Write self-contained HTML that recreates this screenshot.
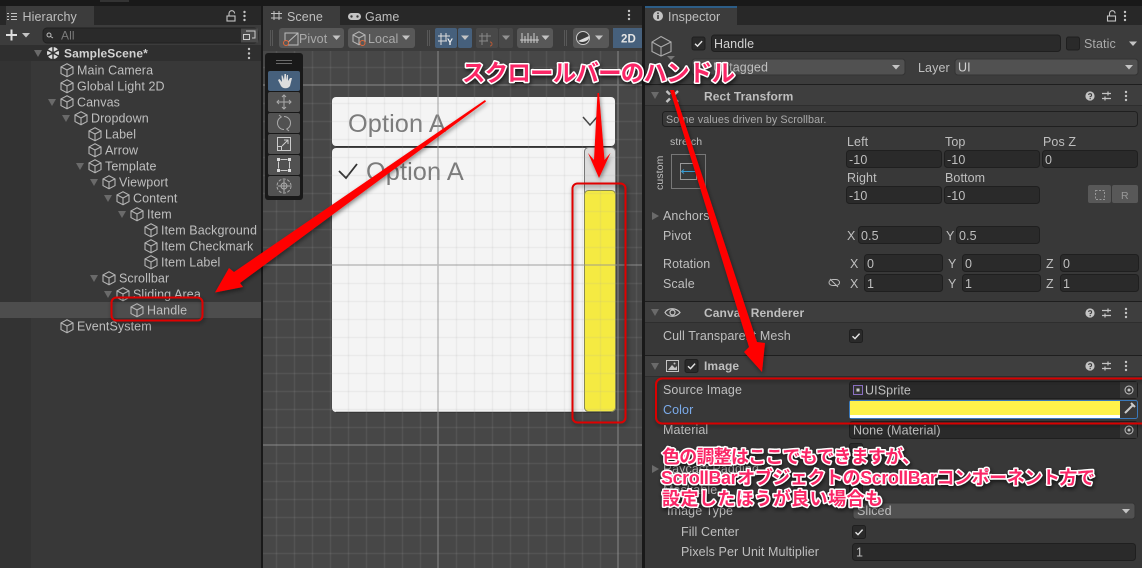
<!DOCTYPE html>
<html lang="ja"><head><meta charset="utf-8"><title>Unity</title>
<style>
html,body{margin:0;padding:0;background:#191919;width:1142px;height:568px;overflow:hidden}
svg{display:block;position:absolute;left:0;top:0}
text{font-family:"Liberation Sans","Noto Sans CJK JP",sans-serif;font-size:12.5px;fill:#bfbfbf;letter-spacing:.1px}
.b{font-weight:bold}
.d{fill:#2a2a2a;stroke:#1f1f1f}
.s{fill:#515151;stroke:#333}
.btn{fill:#585858}
.ic{fill:none;stroke:#b4b4b4;stroke-width:1.1}
.ann{font-family:"Liberation Sans","Noto Sans CJK JP",sans-serif;font-weight:bold;fill:#fb2566;stroke:#fff;stroke-width:3px;paint-order:stroke;stroke-linejoin:round;letter-spacing:0;filter:url(#sh)}
</style></head><body>
<svg width="1142" height="568" viewBox="0 0 1142 568" xmlns="http://www.w3.org/2000/svg">
<defs>
<filter id="sh" x="-5%" y="-20%" width="110%" height="140%"><feDropShadow dx="1" dy="2" stdDeviation="2" flood-color="#000" flood-opacity=".65"/></filter>
<filter id="sh2" x="-10%" y="-10%" width="120%" height="120%"><feDropShadow dx="1" dy="2" stdDeviation="2" flood-color="#000" flood-opacity=".45"/></filter>
<g id="cube"><path class="ic" d="M7 .8 13 3.9V10.6L7 13.7 1 10.6V3.9ZM1 3.9 7 7 13 3.9M7 7V13.7"/></g>
<path id="tri" d="M0 0H8L4 7Z" fill="#6a6a6a"/>
<path id="dd" d="M0 0H8L4 4.5Z" fill="#c4c4c4"/>
<g id="cb"><rect x=".5" y=".5" width="13" height="13" rx="2" fill="#2a2a2a" stroke="#1f1f1f"/><path d="M3.5 7.2 6 9.6 10.6 4.6" fill="none" stroke="#e4e4e4" stroke-width="1.4"/></g>
<g id="hp"><circle cx="4" cy="5" r="4.6" fill="#c4c4c4"/><path d="M2.6 3.9a1.5 1.4 0 1 1 1.6 1.6V6.3" fill="none" stroke="#3e3e3e" stroke-width="1.1"/><rect x="3.6" y="7" width="1.2" height="1.2" fill="#3e3e3e"/><path d="M16 2.5H25M16 7.5H25M22 .5V4.5M19 5.5V9.5" stroke="#c4c4c4" stroke-width="1.2" fill="none"/><circle cx="40" cy="1" r="1.2" fill="#c4c4c4"/><circle cx="40" cy="5" r="1.2" fill="#c4c4c4"/><circle cx="40" cy="9" r="1.2" fill="#c4c4c4"/></g>
<g id="lk"><path d="M2.5 5V2.5a2.8 2.8 0 0 1 5.6 0" fill="none" stroke="#c4c4c4" stroke-width="1.1"/><rect x=".5" y="5" width="8" height="5" fill="none" stroke="#c4c4c4" stroke-width="1.1"/><circle cx="18" cy="1" r="1.2" fill="#c4c4c4"/><circle cx="18" cy="5" r="1.2" fill="#c4c4c4"/><circle cx="18" cy="9" r="1.2" fill="#c4c4c4"/></g>
</defs>

<rect width="1142" height="568" fill="#191919"/>
<rect x="100" y="0" width="29" height="2" fill="#333"/>

<!-- HIERARCHY -->
<rect x="0" y="6" width="261" height="19" fill="#282828"/>
<rect x="6" y="6" width="88" height="19" fill="#3c3c3c"/>
<rect x="0" y="25" width="261" height="543" fill="#383838"/>
<rect x="0" y="25" width="261" height="20" fill="#3c3c3c"/>
<rect x="0" y="61" width="31" height="507" fill="#333"/>
<path d="M7 13.5H9M7 16.5H9M7 19.5H9" stroke="#c4c4c4"/><path d="M11 13.5H17M11 16.5H17M11 19.5H17" stroke="#c4c4c4"/>
<text x="22.5" y="21" style="font-size:12.5px">Hierarchy</text>
<use href="#lk" x="226.500" y="11"/>
<path d="M6 35H17M11.500 29.500V40.500" stroke="#ddd" stroke-width="2"/>
<use href="#dd" x="22" y="33"/>
<rect x="43" y="28" width="215" height="15" rx="4" fill="#2a2a2a" stroke="#202020"/>
<rect x="241" y="28.500" width="17" height="14" fill="#4a4a4a"/>
<circle cx="49" cy="35" r="2" fill="none" stroke="#bbb"/><path d="M50.500 36.500 53 38" stroke="#bbb"/>
<text x="61" y="39.500" style="fill:#7b7b7b;font-size:12px">All</text>
<path d="M246 31h9v7h-3M243.500 34.500h6v5h-6z" fill="none" stroke="#ccc"/>
<rect x="0" y="45" width="261" height="16" fill="#2f2f2f"/>
<use href="#tri" x="34" y="50"/>
<circle cx="53" cy="53" r="6" fill="#ddd"/><path d="M53 47V59M47.500 50 58.500 56M47.500 56 58.500 50" stroke="#2f2f2f" stroke-width="1.4"/>
<text x="64" y="57.500" class="b" style="font-size:12px;fill:#d2d2d2">SampleScene*</text>
<circle cx="249" cy="49" r="1.200" fill="#c4c4c4"/><circle cx="249" cy="53.500" r="1.200" fill="#c4c4c4"/><circle cx="249" cy="58" r="1.200" fill="#c4c4c4"/>
<rect x="0" y="302" width="261" height="16" fill="#4d4d4d"/>

<use href="#cube" x="60" y="63"/><text x="77" y="74.500">Main Camera</text>
<use href="#cube" x="60" y="79"/><text x="77" y="90.500">Global Light 2D</text>
<use href="#tri" x="48" y="99"/><use href="#cube" x="60" y="95"/><text x="77" y="106.500">Canvas</text>
<use href="#tri" x="62" y="115"/><use href="#cube" x="74" y="111"/><text x="91" y="122.500">Dropdown</text>
<use href="#cube" x="88" y="127"/><text x="105" y="138.500">Label</text>
<use href="#cube" x="88" y="143"/><text x="105" y="154.500">Arrow</text>
<use href="#tri" x="76" y="163"/><use href="#cube" x="88" y="159"/><text x="105" y="170.500">Template</text>
<use href="#tri" x="90" y="179"/><use href="#cube" x="102" y="175"/><text x="119" y="186.500">Viewport</text>
<use href="#tri" x="104" y="195"/><use href="#cube" x="116" y="191"/><text x="133" y="202.500">Content</text>
<use href="#tri" x="118" y="211"/><use href="#cube" x="130" y="207"/><text x="147" y="218.500">Item</text>
<use href="#cube" x="144" y="223"/><text x="161" y="234.500">Item Background</text>
<use href="#cube" x="144" y="239"/><text x="161" y="250.500">Item Checkmark</text>
<use href="#cube" x="144" y="255"/><text x="161" y="266.500">Item Label</text>
<use href="#tri" x="90" y="275"/><use href="#cube" x="102" y="271"/><text x="119" y="282.500">Scrollbar</text>
<use href="#tri" x="104" y="291"/><use href="#cube" x="116" y="287"/><text x="133" y="298.500">Sliding Area</text>
<use href="#cube" x="130" y="303"/><text x="147" y="314.500">Handle</text>
<use href="#cube" x="60" y="319"/><text x="77" y="330.500">EventSystem</text>

<!-- SCENE -->
<rect x="263" y="6" width="379" height="19" fill="#282828"/>
<rect x="263" y="6" width="77" height="19" fill="#3c3c3c"/>
<path d="M274 11V20M279 11V20M271 13.500H282M271 18H282" stroke="#c4c4c4"/>
<text x="287" y="21">Scene</text>
<rect x="348" y="13" width="13" height="7" rx="3.500" fill="#c4c4c4"/>
<circle cx="351.500" cy="16.500" r="1.200" fill="#3a3a3a"/><circle cx="357.500" cy="16.500" r="1.200" fill="#3a3a3a"/>
<text x="365" y="21">Game</text>
<circle cx="629" cy="11" r="1.200" fill="#c4c4c4"/><circle cx="629" cy="15" r="1.200" fill="#c4c4c4"/><circle cx="629" cy="19" r="1.200" fill="#c4c4c4"/>
<rect x="263" y="25" width="379" height="26" fill="#3c3c3c"/>
<rect x="263" y="51" width="379" height="517" fill="#474747"/>

<!-- UI panels in scene -->
<rect x="332" y="97" width="283" height="49" rx="4" fill="#f4f4f4"/>
<path d="M336 146.500H611" stroke="#333"/>
<rect x="332" y="148" width="283" height="264" rx="4" fill="#f4f4f4"/>
<path d="M336 412.200H611" stroke="#333"/>
<rect x="584.500" y="147.500" width="31" height="264" rx="4" fill="#dcdcdc" stroke="#777"/>
<rect x="584.500" y="190.500" width="31" height="221" rx="4" fill="#f5ea42" stroke="#8a8a50"/>
<text x="348" y="132" style="font-size:25.300px;fill:#7b7b7b;letter-spacing:.1px">Option A</text>
<text x="366" y="180" style="font-size:25.300px;fill:#7b7b7b;letter-spacing:.1px">Option A</text>
<path d="M583 117 590 125 597 117" fill="none" stroke="#444" stroke-width="1.500"/>
<path d="M339 171 346 178 357 164" fill="none" stroke="#333" stroke-width="1.800"/>

<!-- grid -->
<g stroke="#adadad" stroke-opacity=".13" stroke-width="1.500" fill="none">
<path d="M276.500 51V568M294.500 51V568M312.500 51V568M330.500 51V568M348.500 51V568M366.500 51V568M384.500 51V568M402.500 51V568M420.500 51V568M456.500 51V568M474.500 51V568M492.500 51V568M510.500 51V568M528.500 51V568M546.500 51V568M564.500 51V568M582.500 51V568M600.500 51V568M636.500 51V568"/>
<path d="M263 67.500H642M263 103.500H642M263 121.500H642M263 139.500H642M263 157.500H642M263 175.500H642M263 193.500H642M263 211.500H642M263 229.500H642M263 247.500H642M263 283.500H642M263 301.500H642M263 319.500H642M263 337.500H642M263 355.500H642M263 373.500H642M263 391.500H642M263 409.500H642M263 427.500H642M263 463.500H642M263 481.500H642M263 499.500H642M263 517.500H642M263 535.500H642M263 553.500H642"/>
</g>
<g stroke="#949494" stroke-opacity=".58" stroke-width="1.500" fill="none">
<path d="M438 51V568M618 51V568M263 85H642M263 265H642M263 445H642"/>
</g>

<!-- toolbar -->
<g>
<path d="M270.500 30V46M272.500 30V46M427.500 30V46M429.500 30V46M564.500 30V46M566.500 30V46" stroke="#585858"/>
<rect x="279" y="28" width="65" height="20" rx="3" class="btn"/>
<path d="M285 33H298V45H285Z" fill="none" stroke="#bbb"/><path d="M286 44 298 33" stroke="#bbb"/><circle cx="286" cy="43" r="2.500" fill="#585858" stroke="#e0683a"/>
<text x="299" y="43" style="fill:#aaa">Pivot</text><use href="#dd" x="332.500" y="35.500"/>
<rect x="348" y="28" width="67" height="20" rx="3" class="btn"/>
<use href="#cube" x="352" y="31"/><circle cx="362.500" cy="43" r="2.500" fill="#585858" stroke="#e0683a"/>
<text x="368" y="43" style="fill:#aaa">Local</text><use href="#dd" x="402" y="35.500"/>
<rect x="435" y="28" width="22" height="20" rx="2" fill="#46607c"/>
<path d="M441 33V45M446 33V41M438 36H450M438 41H447" stroke="#ddd"/><text x="447" y="45" class="b" style="font-size:9px;fill:#eee">Y</text>
<rect x="458" y="28" width="14" height="20" rx="2" fill="#46607c"/><use href="#dd" x="461" y="35.500"/>
<rect x="476" y="28" width="22" height="20" rx="2" fill="#484848"/>
<path d="M482 33V45M487 33V41M479 36H491M479 41H488" stroke="#888"/><path d="M490 42a2 2 0 1 1 0 4" stroke="#b85a36" fill="none"/>
<rect x="499" y="28" width="14" height="20" rx="2" fill="#484848"/><use href="#dd" x="502" y="35.500" opacity=".6"/>
<rect x="517" y="28" width="36" height="20" rx="3" class="btn"/>
<path d="M522 33V43M525 36V43M528 33V43M531 36V43M534 33V43M537 36V43M520 40H539" stroke="#ccc"/><use href="#dd" x="541.500" y="35.500"/>
<rect x="573" y="28" width="36" height="20" rx="3" class="btn"/>
<circle cx="583" cy="38" r="6.500" fill="#3a3a3a" stroke="#ccc"/><path d="M578 41a7 5 0 0 0 11-5" fill="#ddd"/><use href="#dd" x="595" y="35.500"/>
<rect x="613" y="28" width="29" height="20" fill="#46607c"/>
<text x="621" y="42.500" class="b" style="font-size:11.500px;fill:#e4e4e4">2D</text>
</g>

<!-- tools -->
<rect x="265" y="53" width="38" height="147" rx="3" fill="#191919"/>
<path d="M276 60.500H292M276 63.500H292" stroke="#6a6a6a"/>
<g>
<rect x="268" y="71" width="32" height="20" rx="2" fill="#46607c"/>
<rect x="268" y="92" width="32" height="20" rx="2" fill="#515151"/>
<rect x="268" y="113" width="32" height="20" rx="2" fill="#515151"/>
<rect x="268" y="134" width="32" height="20" rx="2" fill="#515151"/>
<rect x="268" y="155" width="32" height="20" rx="2" fill="#515151"/>
<rect x="268" y="176" width="32" height="20" rx="2" fill="#515151"/>
<path d="M278 80 281 86C283 89 288 89 290 86L292 78 290 78 288 81V75H287L286 80V74H284.500L284 80 282.500 75.500H281.500L282 82 279.500 79Z" fill="#ddd"/>
<path d="M284 95V109M277 102H291M282 97 284 95 286 97M282 107 284 109 286 107M279 100 277 102 279 104M289 100 291 102 289 104" fill="none" stroke="#aaa"/>
<path d="M284 116.500a6.500 6.500 0 0 1 6.500 6.500 6.500 6.500 0 0 1-4 6M284 129.500a6.500 6.500 0 0 1-6.500-6.500 6.500 6.500 0 0 1 4-6M286.500 129l2.500 2M281.500 117l-2.500-2" fill="none" stroke="#aaa"/>
<rect x="277.500" y="137.500" width="13" height="13" fill="none" stroke="#ccc"/><path d="M277.500 146.500H281.500V150.500M282 146 288 140M284 140H288V144" fill="none" stroke="#ccc"/>
<rect x="278.500" y="159.500" width="11" height="11" fill="none" stroke="#ccc" stroke-dasharray="7 4" stroke-dashoffset="-2"/><path d="M277 158h3v3h-3zM288 158h3v3h-3zM277 169h3v3h-3zM288 169h3v3h-3z" fill="#ddd"/>
<circle cx="284" cy="186" r="7" fill="none" stroke="#aaa" stroke-dasharray="3 1.500"/><path d="M284 180V192M278 186H290" stroke="#aaa"/><circle cx="284" cy="186" r="3" fill="none" stroke="#aaa"/>
</g>

<!-- INSPECTOR -->
<rect x="645" y="6" width="497" height="19" fill="#282828"/>
<rect x="645" y="8" width="92" height="17" fill="#3c3c3c"/>
<rect x="645" y="6" width="92" height="2" fill="#2c5d87"/>
<rect x="645" y="25" width="497" height="543" fill="#383838"/>
<rect x="645" y="25" width="497" height="59" fill="#3c3c3c"/>
<circle cx="658" cy="16" r="5" fill="#c4c4c4"/><rect x="657.200" y="15" width="1.600" height="4" fill="#3c3c3c"/><rect x="657.200" y="12.500" width="1.600" height="1.600" fill="#3c3c3c"/>
<text x="668" y="21">Inspector</text>
<use href="#lk" x="1107" y="11"/>

<path class="ic" style="stroke:#aaa" d="M661 36.500 671 42V51.500L661 56 652 51.500V42ZM652 42 661 47 671 42M661 47V56"/>
<path d="M670 56h8l-4 4z" fill="#777" transform="translate(-3 0)"/>
<use href="#cb" x="691.500" y="36.500"/>
<rect x="711.500" y="35" width="349" height="16.500" rx="3" class="d"/>
<text x="714" y="48" style="fill:#d2d2d2">Handle</text>
<rect x="1066.500" y="37" width="13" height="13" rx="2" class="d"/>
<text x="1084" y="48" style="fill:#aaa">Static</text>
<use href="#dd" x="1129" y="41.500"/>
<rect x="692" y="59" width="213" height="16" rx="3" class="s"/>
<text x="713" y="71.500">Untagged</text>
<use href="#dd" x="892" y="65"/>
<text x="918" y="72">Layer</text>
<rect x="955" y="59" width="183" height="16" rx="3" class="s"/>
<text x="958" y="71.500" style="fill:#d2d2d2">UI</text>
<use href="#dd" x="1125" y="65"/>

<rect x="645" y="84" width="497" height="1" fill="#1e1e1e"/>
<rect x="645" y="85" width="497" height="20" fill="#3e3e3e"/>
<rect x="645" y="105" width="497" height="1" fill="#2e2e2e"/>
<use href="#tri" x="651" y="92"/>
<g stroke="#c4c4c4" stroke-width="2.400" fill="#c4c4c4"><path d="M666.500 91 670 94.500M678 91 674.500 94.500M666.500 102 670 98.500M678 102 674.500 98.500"/></g>
<text x="704" y="100.500" class="b" style="font-size:12px">Rect Transform</text>
<use href="#hp" x="1086" y="91"/>
<rect x="662.500" y="111.500" width="475" height="15" rx="3" fill="#383838" stroke="#1f1f1f"/>
<text x="666" y="123" style="font-size:10.800px;fill:#aaa">Some values driven by Scrollbar.</text>
<text x="670" y="145" style="font-size:10.500px">stretch</text>
<text transform="translate(663 190) rotate(-90)" x="0" y="0" style="font-size:10.500px">custom</text>
<rect x="671.500" y="154.500" width="34" height="34" fill="none" stroke="#777"/>
<rect x="680.500" y="163.500" width="16" height="16" fill="none" stroke="#999"/>
<path d="M682 171.500H695M684 169.500 681.500 171.500 684 173.500" stroke="#3a9bd0" fill="none"/>

<text x="847" y="146">Left</text><text x="945" y="146">Top</text><text x="1043" y="146">Pos Z</text>
<rect x="846.500" y="150.500" width="95" height="17" rx="3" class="d"/><rect x="944.500" y="150.500" width="95" height="17" rx="3" class="d"/><rect x="1042.500" y="150.500" width="95" height="17" rx="3" class="d"/>
<text x="849" y="164">-10</text><text x="947" y="164">-10</text><text x="1045" y="164">0</text>
<text x="847" y="182">Right</text><text x="945" y="182">Bottom</text>
<rect x="846.500" y="186.500" width="95" height="17" rx="3" class="d"/><rect x="944.500" y="186.500" width="95" height="17" rx="3" class="d"/>
<text x="849" y="200">-10</text><text x="947" y="200">-10</text>
<rect x="1088" y="185" width="23" height="18" rx="2" fill="#585858"/><rect x="1112" y="185" width="26" height="18" rx="2" fill="#585858"/>
<rect x="1095.500" y="190.500" width="9" height="9" fill="none" stroke="#999" stroke-dasharray="2 1.500"/>
<text x="1121" y="199" style="font-size:10.500px;fill:#999">R</text>
<path d="M652 212 659 216 652 220Z" fill="#6a6a6a"/>
<text x="663" y="220">Anchors</text>
<text x="663" y="240">Pivot</text>
<text x="847" y="240">X</text><rect x="858.500" y="226.500" width="83" height="17" rx="3" class="d"/><text x="861" y="240">0.5</text>
<text x="946" y="240">Y</text><rect x="956.500" y="226.500" width="83" height="17" rx="3" class="d"/><text x="959" y="240">0.5</text>
<text x="663" y="268">Rotation</text>
<text x="850" y="268">X</text><rect x="864.500" y="254.500" width="78" height="17" rx="3" class="d"/><text x="867" y="268">0</text>
<text x="948" y="268">Y</text><rect x="962.500" y="254.500" width="78" height="17" rx="3" class="d"/><text x="965" y="268">0</text>
<text x="1046" y="268">Z</text><rect x="1060.500" y="254.500" width="78" height="17" rx="3" class="d"/><text x="1063" y="268">0</text>
<text x="663" y="288">Scale</text>
<path d="M829 282.500c0-2 2-3 4-3h3c2 0 3.500 1.500 3.500 3s-1.500 3-3.500 3h-3c-2 0-4-1-4-3ZM830 279 838 287" fill="none" stroke="#bbb"/>
<text x="850" y="288">X</text><rect x="864.500" y="274.500" width="78" height="17" rx="3" class="d"/><text x="867" y="288">1</text>
<text x="948" y="288">Y</text><rect x="962.500" y="274.500" width="78" height="17" rx="3" class="d"/><text x="965" y="288">1</text>
<text x="1046" y="288">Z</text><rect x="1060.500" y="274.500" width="78" height="17" rx="3" class="d"/><text x="1063" y="288">1</text>

<rect x="645" y="301" width="497" height="1" fill="#1e1e1e"/>
<rect x="645" y="302" width="497" height="20" fill="#3e3e3e"/>
<rect x="645" y="322" width="497" height="1" fill="#2e2e2e"/>
<use href="#tri" x="651" y="309"/>
<path d="M665 312.500c3-5 11-5 15 0-4 5-12 5-15 0Z" fill="none" stroke="#c4c4c4" stroke-width="1.200"/><circle cx="672.500" cy="312.500" r="2.500" fill="none" stroke="#c4c4c4" stroke-width="1.200"/>
<text x="704" y="317" class="b" style="font-size:12px">Canvas Renderer</text>
<use href="#hp" x="1086" y="308"/>
<text x="663" y="340">Cull Transparent Mesh</text>
<use href="#cb" x="849" y="329"/>

<rect x="645" y="355" width="497" height="1" fill="#1e1e1e"/>
<rect x="645" y="356" width="497" height="20" fill="#3e3e3e"/>
<rect x="645" y="376" width="497" height="1" fill="#2e2e2e"/>
<use href="#tri" x="651" y="363"/>
<rect x="666.500" y="360.500" width="12" height="11" fill="none" stroke="#c4c4c4"/><path d="M668 370 672 365 675 368 677 366V370Z" fill="#c4c4c4"/><circle cx="674.500" cy="363.500" r="1" fill="#c4c4c4"/>
<use href="#cb" x="684.500" y="359"/>
<text x="704" y="370" class="b" style="font-size:12px">Image</text>
<use href="#hp" x="1086" y="361"/>
<text x="663" y="394">Source Image</text>
<rect x="849.500" y="381.500" width="288" height="17" rx="3" class="d"/>
<rect x="853.500" y="385.500" width="9" height="9" fill="#333" stroke="#8a6fc0"/><rect x="856.500" y="388.500" width="3" height="3" fill="#ccc"/>
<text x="865" y="394.500">UISprite</text>
<rect x="1120" y="382" width="17" height="16" fill="#383838"/><circle cx="1129" cy="390" r="4" fill="none" stroke="#c4c4c4"/><circle cx="1129" cy="390" r="1.500" fill="#c4c4c4"/>
<text x="663" y="414" style="fill:#7babea">Color</text>
<rect x="849.500" y="400.500" width="288" height="18" rx="2" fill="#383838" stroke="#3a79bb"/>
<rect x="850" y="401" width="270" height="14" fill="#fff24a"/>
<rect x="850" y="415" width="270" height="3" fill="#fff"/>
<path d="M1125 413 1133 405M1131 403 1135 407" stroke="#ccc" stroke-width="2" fill="none"/>
<text x="663" y="434">Material</text>
<rect x="849.500" y="421.500" width="288" height="17" rx="3" class="d"/>
<text x="853" y="434.500">None (Material)</text>
<rect x="1120" y="422" width="17" height="16" fill="#383838"/><circle cx="1129" cy="430" r="4" fill="none" stroke="#c4c4c4"/><circle cx="1129" cy="430" r="1.500" fill="#c4c4c4"/>
<rect x="849.500" y="443.500" width="13" height="13" rx="2" class="d"/>
<path d="M652 465 659 469 652 473Z" fill="#6a6a6a"/>
<text x="663" y="473">Raycast Padding</text>
<text x="663" y="494">Maskable</text>
<rect x="849.500" y="483.500" width="13" height="13" rx="2" class="d"/>
<text x="667" y="515">Image Type</text>
<rect x="853" y="503" width="282" height="16" rx="3" class="s"/>
<text x="857" y="515">Sliced</text>
<use href="#dd" x="1122" y="509"/>
<text x="681" y="536">Fill Center</text>
<use href="#cb" x="852" y="525"/>
<text x="681" y="556">Pixels Per Unit Multiplier</text>
<rect x="852.500" y="543.500" width="283" height="17" rx="3" class="d"/>
<text x="856" y="556.500">1</text>

<!-- RED ANNOTATIONS -->
<g filter="url(#sh2)">
<rect x="111.500" y="297.500" width="91" height="23" rx="5" fill="none" stroke="#e00000" stroke-width="2"/>
<rect x="572.500" y="183.500" width="53" height="239" rx="5" fill="none" stroke="#e00000" stroke-width="2"/>
<rect x="656" y="378.500" width="500" height="45" rx="6" fill="none" stroke="#d80000" stroke-width="2"/>
<path d="M485 100 486 101.500 240 283 243 287 215 292.500 229 268 234 272Z" fill="#f00"/>
<path d="M597.500 93H599L604.500 160 610.500 153 599 178 588 153 594 160Z" fill="#f00"/>
<path d="M670 90H674L757 342 765 343 762 372 744 352 749 347Z" fill="#f00"/>
</g>
<text class="ann" x="462" y="81" style="font-size:23.500px" textLength="273" lengthAdjust="spacing">スクロールバーのハンドル</text>
<text class="ann" x="662" y="463" style="font-size:18px" textLength="258" lengthAdjust="spacing">色の調整はここでもできますが、</text>
<text class="ann" x="661" y="484" style="font-size:18px" textLength="434" lengthAdjust="spacing">ScrollBarオブジェクトのScrollBarコンポーネント方で</text>
<text class="ann" x="662" y="505" style="font-size:18px" textLength="221" lengthAdjust="spacing">設定したほうが良い場合も</text>
</svg>
</body></html>
